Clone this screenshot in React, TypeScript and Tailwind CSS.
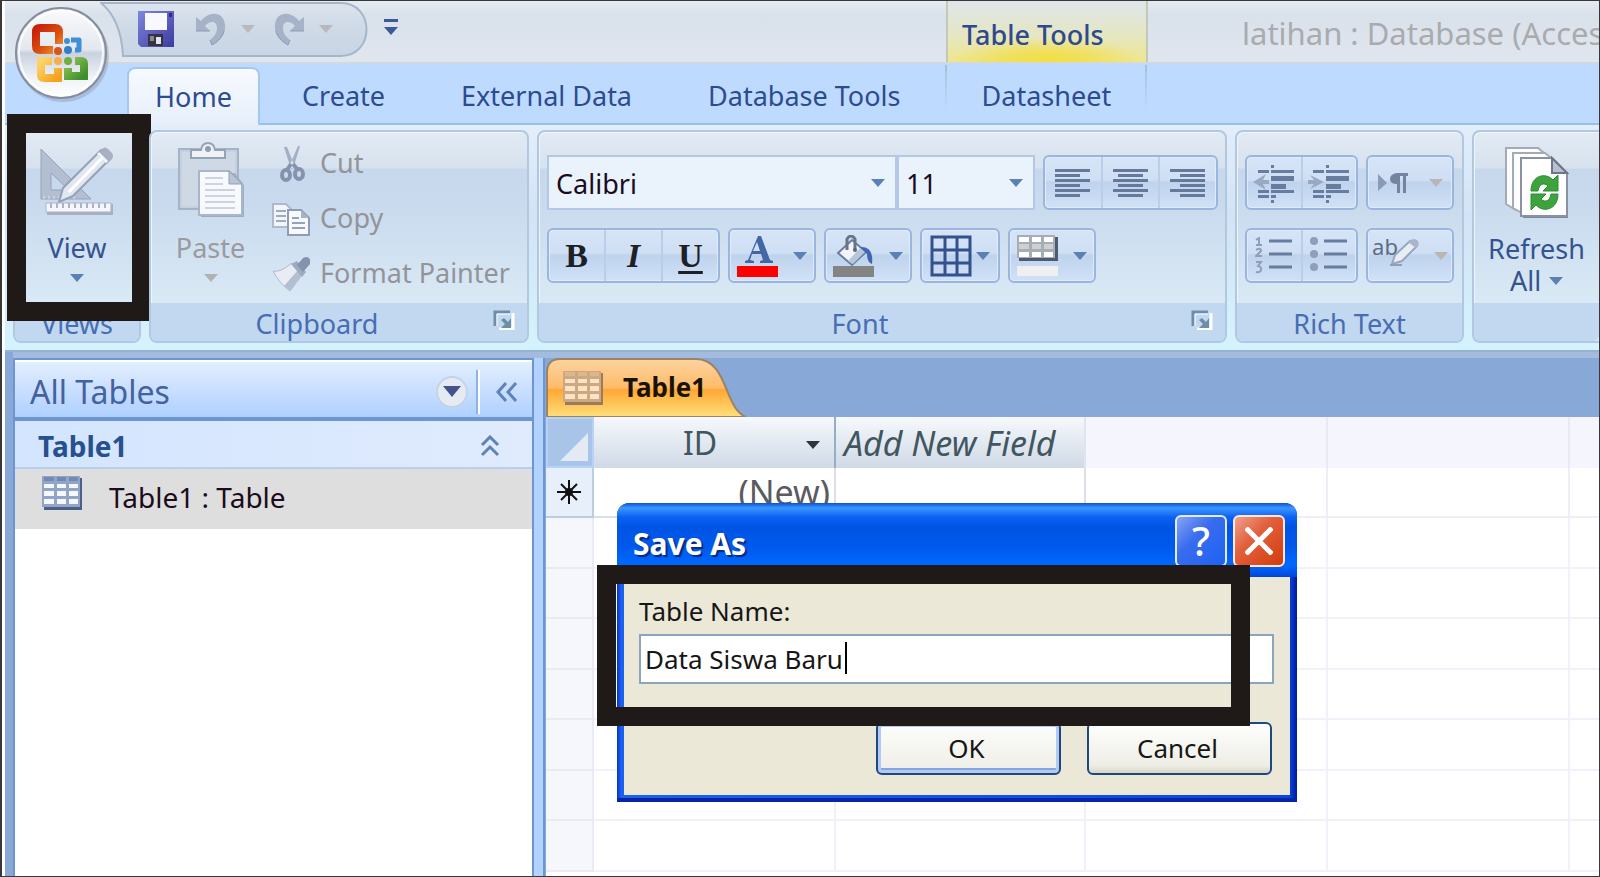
import React, { useState } from "react";

const Arrow = ({ className = "text-[#5b80b5]" }: { className?: string }) => (
  <svg width="14" height="8" viewBox="0 0 14 8" className={`shrink-0 ${className}`}>
    <path d="M0 0h14L7 8z" fill="currentColor" />
  </svg>
);

const OfficeOrb = () => (
  <svg width="98" height="98" viewBox="0 0 98 98">
    <defs>
      <linearGradient id="orb" x1="0" y1="0" x2="0" y2="1">
        <stop offset="0" stopColor="#fbfbfc" />
        <stop offset=".46" stopColor="#e3e7ee" />
        <stop offset=".5" stopColor="#c9d1e0" />
        <stop offset=".78" stopColor="#f0f3f7" />
        <stop offset="1" stopColor="#ffffff" />
      </linearGradient>
      <linearGradient id="orbRed" x1="0" y1="0" x2="1" y2="1">
        <stop offset="0" stopColor="#c9200c" />
        <stop offset=".6" stopColor="#d95010" />
        <stop offset="1" stopColor="#f09030" />
      </linearGradient>
      <linearGradient id="orbYellow" x1="0" y1="0" x2="1" y2="1">
        <stop offset="0" stopColor="#fbd469" />
        <stop offset="1" stopColor="#f6a21a" />
      </linearGradient>
      <linearGradient id="orbGreen" x1="0" y1="0" x2="1" y2="1">
        <stop offset="0" stopColor="#8cc152" />
        <stop offset="1" stopColor="#3f8f2c" />
      </linearGradient>
    </defs>
    <circle cx="50" cy="51" r="46" fill="#7f8797" opacity=".35" />
    <circle cx="48" cy="48" r="45" fill="url(#orb)" stroke="#858d9e" strokeWidth="2" />
    <circle cx="48" cy="48" r="42" fill="none" stroke="#fff" strokeWidth="2" opacity=".8" />
    <path d="M40 45H27q-4 0-4-4V27q0-4 4-4h15q4 0 4 4v12" fill="none" stroke="url(#orbRed)" strokeWidth="8" />
    <path d="M58 35h8v10h-4" fill="none" stroke="#3d8fd6" strokeWidth="5" strokeLinejoin="round" />
    <path d="M39 56H28v14q0 3 3 3h14V63" fill="none" stroke="url(#orbYellow)" strokeWidth="8" />
    <path d="M62 56h6q3 0 3 3v12H55v-8" fill="none" stroke="url(#orbGreen)" strokeWidth="8" />
    <circle cx="45" cy="46" r="4" fill="#d9541c" />
    <circle cx="55" cy="45" r="4" fill="#2f80c6" />
    <circle cx="54" cy="36" r="3" fill="#3d8fd6" />
    <circle cx="45" cy="56" r="4" fill="#f5ae48" />
    <circle cx="55" cy="56" r="4" fill="#72ad3e" />
  </svg>
);

const SaveIcon = () => (
  <svg width="36" height="36" viewBox="0 0 36 36">
    <defs>
      <linearGradient id="floppy" x1="0" y1="0" x2="1" y2="1">
        <stop offset="0" stopColor="#7f86dc" />
        <stop offset="1" stopColor="#3d3aa0" />
      </linearGradient>
    </defs>
    <path d="M0 0h36v36H3l-3-3z" fill="url(#floppy)" />
    <path d="M7 2h22v17H7z" fill="#f8f9ff" />
    <path d="M31 2h3v4h-3z" fill="#2f2c86" />
    <path d="M10 23h15v12H10z" fill="#33343f" />
    <path d="M18 26h5v7h-5z" fill="#e3e5ee" />
    <path d="M12 25h4v5h-4z" fill="#878a96" />
  </svg>
);

const UndoIcon = ({ flip = false }: { flip?: boolean }) => (
  <svg width="32" height="34" viewBox="0 0 32 34" className={flip ? "-scale-x-100" : ""}>
    <path d="M1 5v14h14l-5-5c4-5 12-6 12 2 0 5-3 9-7 12l2 5c8-4 14-11 13-20C29 0 15-2 6 9z" fill="#a5b2c8" />
    <path d="M1 19h14M15 28l2 5c6-3 11-9 12-14" fill="none" stroke="#8d9bb4" strokeWidth="1" />
  </svg>
);

const ViewIcon = () => (
  <svg width="76" height="72" viewBox="0 0 76 72">
    <path d="M2 3v50h50zM12 27l18 17H12z" fill="#b3bfd1" fillRule="evenodd" stroke="#93a2ba" />
    <path d="M5 53v-3m5 3v-3m5 3v-3m5 3v-3m5 3v-3m5 3v-3m5 3v-3" stroke="#dce4ef" />
    <path d="M20 56l4-14L62 4l10 8-38 38z" fill="#e1e7f0" stroke="#94a0b6" strokeWidth="2" />
    <path d="M58 8l5-5q3-3 6 0l4 4q2 3 0 6l-5 5z" fill="#a7b1c3" />
    <path d="M59 7l9 9" stroke="#f1f4f8" strokeWidth="3" />
    <path d="M30 46L64 11" stroke="#fff" strokeWidth="3" />
    <path d="M8 58h66v11H8z" fill="#a5b0c2" />
    <path d="M7 57h65v9H7z" fill="#f4f6fa" stroke="#aab5c7" />
    <path d="M12 57v5m6-5v5m6-5v5m6-5v5m6-5v5m6-5v5m6-5v5m6-5v5m6-5v5m6-5v5" stroke="#a8b3c5" strokeWidth="2" />
  </svg>
);

const PasteIcon = () => (
  <svg width="68" height="76" viewBox="0 0 68 76">
    <path d="M2 7h59v60H2z" fill="#c6d1e0" stroke="#a5b3c8" strokeWidth="2" />
    <path d="M5 10h53v54H5z" fill="#cfd9e6" />
    <path d="M14 8h10q1-7 7-7t7 7h10v8H14z" fill="#eef2f7" stroke="#95a3b9" strokeWidth="2" />
    <circle cx="31" cy="7" r="3" fill="#8f9db4" />
    <path d="M24 31h34l9 12v32H24z" fill="#9fadc2" />
    <path d="M22 29h30l13 13v31H22z" fill="#f7f9fc" stroke="#a9b5c8" strokeWidth="2" />
    <path d="M52 29v13h13z" fill="#b8c3d3" stroke="#93a1b8" />
    <path d="M28 36h18M28 42h18M28 48h30M28 54h30M28 60h30M28 66h30" stroke="#ccd4e0" strokeWidth="2" />
  </svg>
);

const CutIcon = () => (
  <svg width="38" height="38" viewBox="0 0 38 38">
    <path d="M12 2l3 0 8 20-4 2zM28 1l-2 0-9 21 4 2z" fill="#a2afc4" />
    <path d="M19 19l-4 6M21 19l5 6" stroke="#8593ae" strokeWidth="4" />
    <ellipse cx="14" cy="30" rx="4" ry="5" fill="#cfd9e8" stroke="#8593ae" strokeWidth="4" />
    <ellipse cx="27" cy="29" rx="4" ry="5" fill="#cfd9e8" stroke="#8593ae" strokeWidth="4" />
  </svg>
);

const CopyIcon = () => (
  <svg width="38" height="34" viewBox="0 0 38 34">
    <path d="M1 2h13l5 5v18H1z" fill="#f2f5f9" stroke="#aeb9cb" strokeWidth="2" />
    <path d="M4 9h10M4 14h10M4 19h10" stroke="#9eabc0" strokeWidth="2" />
    <path d="M16 8h13l8 8v17H16z" fill="#f7f9fc" stroke="#8e9cb5" strokeWidth="2" />
    <path d="M29 8v8h8z" fill="#a7b3c6" />
    <path d="M20 16h7M20 21h13M20 26h13" stroke="#94a2ba" strokeWidth="2" />
  </svg>
);

const PainterIcon = () => (
  <svg width="38" height="36" viewBox="0 0 38 36">
    <path d="M1 15q7 2 19-8l10 12q-5 7-12 16Q7 27 1 15z" fill="#e9edf3" stroke="#b1bccd" />
    <path d="M18 35l12-16-4-5-14 16z" fill="#b3bed0" />
    <path d="M19 8l6-3 9 11-4 5z" fill="#9daabf" />
    <path d="M25 9l6-7q4-2 6 0t1 6l-7 8z" fill="#8593ae" />
  </svg>
);

const Launcher = () => (
  <svg width="22" height="20" viewBox="0 0 22 20">
    <path d="M20 3v16H6" fill="none" stroke="#fff" strokeWidth="3" />
    <path d="M2 16V2h15" fill="none" stroke="#6d8ea9" strokeWidth="3" />
    <path d="M4 16V4h13" fill="none" stroke="#fff" strokeWidth="1" />
    <path d="M18 8v10H8l4-4-4-4 3-2 4 4z" fill="#6d8ea9" />
  </svg>
);

const AlignIcon = ({ mode }: { mode: "left" | "center" | "right" }) => {
  const x = { left: 0, center: 5, right: 10 }[mode];
  return (
    <svg width="36" height="28" viewBox="0 0 36 28" fill="#66799b">
      {[0, 10, 20].map((y) => (
        <React.Fragment key={y}>
          <rect x="0" y={y} width="35" height="3" />
          <rect x={x} y={y + 5} width="25" height="3" />
        </React.Fragment>
      ))}
    </svg>
  );
};

const FontColorIcon = () => (
  <svg width="42" height="42" viewBox="0 0 42 42">
    <path d="M21 1h3l9 24 3 1v2H23v-2l3-1-2-6H15l-2 6 4 1v2H8v-2l3-1zm-5 15h7l-3-9z" fill="#4366a5" />
    <path d="M0 31h41v11H0z" fill="#ff0000" />
  </svg>
);

const BucketIcon = () => (
  <svg width="42" height="42" viewBox="0 0 42 42">
    <path d="M5 18L19 5l14 12-14 13z" fill="#f1f5fb" stroke="#6b7d9c" strokeWidth="2" />
    <path d="M20 29l12-12-5-4-12 13z" fill="#b6c6df" />
    <path d="M14 15V4q4-6 8 0v11" fill="none" stroke="#697587" strokeWidth="3" />
    <circle cx="22" cy="15" r="2" fill="#5a6576" />
    <path d="M27 12q14-1 12 17-5-2-5-10z" fill="#3e66b4" />
    <path d="M0 31h41v11H0z" fill="#848484" />
  </svg>
);

const BordersIcon = () => (
  <svg width="42" height="42" viewBox="0 0 42 42" fill="none" stroke="#33518d" strokeWidth="3">
    <path d="M2 2h38v38H2zM15 2v38M27 2v38M2 15h38M2 28h38" />
  </svg>
);

const AltRowIcon = () => (
  <svg width="42" height="42" viewBox="0 0 42 42">
    <path d="M2 2h39v24H2z" fill="#4f5b6f" />
    <path d="M0 0h38v23H0z" fill="#a7adb7" />
    <path d="M2 2h10v5H2zm13 0h9v5h-9zm12 0h9v5h-9zM2 17h10v5H2zm13 0h9v5h-9zm12 0h9v5h-9z" fill="#fff" />
    <path d="M2 9h10v5H2zm13 0h9v5h-9zm12 0h9v5h-9z" fill="#d0cfd1" />
    <path d="M0 31h41v10H0z" fill="#efefef" />
  </svg>
);

const IndentIcon = ({ increase = false }: { increase?: boolean }) => (
  <svg width="42" height="40" viewBox="0 0 42 40">
    <path
      d={increase ? "M2 12l14 7-14 7 4-5H0v-4h6z" : "M0 19l13-8-3 6h6v4h-6l3 6z"}
      fill="#9aa9c3"
    />
    <path d="M5 7h11v3H5zM18 7h23v3H18zM18 13h23v5H18zM18 21h15v5H18zM5 27h11v3H5zM18 27h23v3H18zM5 32h11v3H5zM18 32h5v3h-5zM18 2h3v3h-3zM18 37h3v3h-3z" fill="#687c9f" />
  </svg>
);

const ParagraphIcon = () => (
  <svg width="32" height="24" viewBox="0 0 32 24">
    <path d="M1 3l9 9-9 8z" fill="#8b9bb7" />
    <path d="M31 2v3h-2v17h-3V5h-3v17h-3V13q-7 0-7-5t7-6z" fill="#72849f" />
  </svg>
);

const ListIcon = ({ numbered = false }: { numbered?: boolean }) => (
  <svg width="38" height="38" viewBox="0 0 38 38">
    <path d="M14 4h23M14 17h23M14 30h23" stroke="#687c9f" strokeWidth="3" />
    {numbered ? (
      <path d="M1 3l3-2v7M1 8h6M1 13q5-3 5 1l-5 5h6M1 25h5l-3 4q4 1 3 4t-5 2" fill="none" stroke="#8f9eb9" strokeWidth="2" />
    ) : (
      <g fill="#8f9eb9">
        <circle cx="4" cy="4" r="4" />
        <circle cx="4" cy="17" r="4" />
        <circle cx="4" cy="30" r="4" />
      </g>
    )}
  </svg>
);

const PenIcon = () => (
  <svg width="30" height="28" viewBox="0 0 30 28">
    <path d="M2 26l3-9L20 3l7 5-15 15z" fill="#e8edf4" stroke="#97a5bd" strokeWidth="2" />
    <path d="M18 4q5-5 9-2 4 4-1 8" fill="#a9b5c9" />
    <path d="M0 27h12" stroke="#8f9eb9" strokeWidth="2" />
  </svg>
);

const RefreshIcon = () => (
  <svg width="66" height="74" viewBox="0 0 66 74">
    <path d="M2 2h32l12 10v52H12L2 58z" fill="#fdfdfe" stroke="#a3aab8" strokeWidth="2" />
    <path d="M9 7h32l12 10v50H18l-9-5z" fill="#fdfdfe" stroke="#a3aab8" strokeWidth="2" />
    <path d="M19 14h30l15 15v43H19z" fill="#7d8797" />
    <path d="M17 12h31l15 15v43H17z" fill="#fff" stroke="#8a92a2" strokeWidth="2" />
    <path d="M48 12v15h15z" fill="#b8c0cd" stroke="#6d7686" strokeWidth="2" />
    <path d="M27 45c0-16 15-19 22-11l5-5v16H39l5-5c-4-4-9-2-10 5z" fill="#3da33c" stroke="#2c8a34" />
    <path d="M54 48c0 16-15 19-22 11l-5 5V48h15l-5 5c4 4 9 2 10-5z" fill="#3da33c" stroke="#2c8a34" />
  </svg>
);

const TableIcon = ({ faded = false }: { faded?: boolean }) => (
  <svg width="40" height="34" viewBox="0 0 40 34">
    <path d="M2 2h38v32H2z" fill={faded ? "#9a7b5c" : "#4c5f86"} />
    <path d="M0 0h38v31H0z" fill={faded ? "#cda983" : "#93a5c6"} />
    <path d="M2 1h10v4H2zm13 0h9v4h-9zm12 0h9v4h-9z" fill={faded ? "#dcb78e" : "#7288b5"} />
    <path
      d="M2 8h10v4H2zm13 0h9v4h-9zm12 0h9v4h-9zM2 15h10v5H2zm13 0h9v5h-9zm12 0h9v5h-9zM2 23h10v5H2zm13 0h9v5h-9zm12 0h9v5h-9z"
      fill={faded ? "#fce3c4" : "#f5f8fd"}
    />
  </svg>
);

const Chevrons = ({ up = false }: { up?: boolean }) => (
  <svg width="22" height="22" viewBox="0 0 22 22" fill="none" stroke="#5f83b5" strokeWidth="3">
    <path d={up ? "M3 10l8-8 8 8M3 20l8-8 8 8" : "M10 2l-8 9 8 9M20 2l-8 9 8 9"} />
  </svg>
);

interface GroupProps {
  label: string;
  className: string;
  launcher?: boolean;
  children: React.ReactNode;
}

const RibbonGroup = ({ label, className, launcher, children }: GroupProps) => (
  <section
    className={`relative flex flex-col h-[213px] rounded-lg border-2 border-[#b2c8e0] bg-[linear-gradient(to_bottom,#e2eaf3_0,#d7e2ef_36px,#c7d8ed_37px,#c9daee_70px,#d9e9f5_172px)] shadow-[inset_1px_1px_0_#eef5fb] ${className}`}
  >
    <div className="flex-1">{children}</div>
    <div className="flex h-[38px] items-center rounded-b-md bg-[#c1d8f0] pt-1 text-[#476db3]">
      <span className="flex-1 text-center">{label}</span>
      {launcher && (
        <button aria-label={`${label} options`} className="mr-2 -mt-2 flex w-9 justify-end pr-1">
          <Launcher />
        </button>
      )}
    </div>
  </section>
);

const Cluster = ({ className = "", children }: { className?: string; children: React.ReactNode }) => (
  <div
    className={`flex h-[55px] rounded-md border-2 border-[#9ab6de] divide-x-2 divide-[#b9cee9] bg-[linear-gradient(to_bottom,#d6e4f6_0%,#cfdff4_45%,#bfd3ed_50%,#d0e1f7_100%)] shadow-[inset_0_0_0_1px_#dfeafa] ${className}`}
  >
    {children}
  </div>
);

const Tool = ({ label, className = "flex-1", children }: { label: string; className?: string; children: React.ReactNode }) => (
  <button aria-label={label} className={`flex items-center justify-center ${className}`}>
    {children}
  </button>
);

const Combo = ({ label, options, className }: { label: string; options: string[]; className: string }) => (
  <div className={`relative h-[55px] ${className}`}>
    <select
      aria-label={label}
      className="h-full w-full appearance-none border-2 border-[#b3c8e4] bg-[#eaf2fc] pl-[7px] pt-1 text-[#1b0c1c] outline-none"
    >
      {options.map((o) => (
        <option key={o}>{o}</option>
      ))}
    </select>
    <span className="pointer-events-none absolute right-3 top-1/2 -translate-y-1/2">
      <Arrow />
    </span>
  </div>
);

const tabs = ["Create", "External Data", "Database Tools"];

const Header = () => (
  <header className="relative">
    <div className="flex h-[63px] items-stretch border-b-2 border-[#cfd9e5] bg-[linear-gradient(to_bottom,#e6ebf1_0,#d9e1eb_14px,#e0e6ee_60px)]">
      <div className="relative ml-[95px] h-[56px] w-[268px] shrink-0">
        <svg className="absolute inset-0" width="268" height="56" viewBox="0 0 268 56">
          <defs>
            <linearGradient id="qat" x1="0" y1="0" x2="0" y2="1">
              <stop offset="0" stopColor="#dce4ee" />
              <stop offset=".45" stopColor="#cfdae7" />
              <stop offset="1" stopColor="#c7d5e5" />
            </linearGradient>
          </defs>
          <path d="M1 2q20 16 22 53h218c34 0 34-53 0-53z" fill="url(#qat)" stroke="#a5b6cb" strokeWidth="2" />
        </svg>
        <div className="relative flex h-[56px] items-center pl-[38px]">
          <button aria-label="Save"><SaveIcon /></button>
          <button aria-label="Undo" className="ml-[21px] flex items-center gap-[14px]">
            <UndoIcon />
            <Arrow className="text-[#b9b9bd]" />
          </button>
          <button aria-label="Redo" className="ml-[18px] flex items-center gap-[14px]">
            <UndoIcon flip />
            <Arrow className="text-[#b9b9bd]" />
          </button>
        </div>
      </div>
      <button aria-label="Customize toolbar" className="ml-4 flex h-[52px] flex-col items-center justify-center gap-[5px]">
        <span className="h-[3px] w-[14px] bg-[#3a5a98]" />
        <Arrow className="text-[#3a5a98]" />
      </button>
      <div className="ml-[548px] flex w-[202px] shrink-0 items-center border-x-2 border-[#c3c9b8] bg-[radial-gradient(ellipse_50%_24px_at_bottom,#f3df3b_0%,#f0e05e_45%,transparent_100%),linear-gradient(to_bottom,#dfe6ea_0%,#e5e6c4_55%,#efe690_100%)] pl-[14px] pt-2 font-medium text-[#2f4a8c]">
        Table Tools
      </div>
      <h1 className="ml-[94px] flex-1 overflow-hidden whitespace-nowrap pt-2 text-[31px] leading-[48px] text-[#a9abae]">
        latihan : Database (Access 2007)
      </h1>
    </div>
    <nav className="flex h-[61px] items-end border-b-2 border-[#9dbfeb] bg-[#bedbff] text-[#2d4b91]">
      <a href="#home" className="-mb-0.5 ml-[122px] mr-1 flex h-[58px] w-[133px] items-center justify-center rounded-t-lg border-2 border-b-0 border-[#a3c8f3] bg-[linear-gradient(to_bottom,#f7faff,#e6effb)]">
        Home
      </a>
      {tabs.map((tab) => (
        <a key={tab} href="#tab" className="flex h-[58px] items-center whitespace-nowrap px-[38px] pt-1">
          {tab}
        </a>
      ))}
      <a href="#datasheet" className="ml-[7px] flex h-[58px] w-[202px] items-center justify-center border-x-2 pt-1 [border-image:linear-gradient(to_bottom,#a8bed6,#bedbff_80%)_1]">
        Datasheet
      </a>
    </nav>
    <button aria-label="Office" className="absolute left-[8px] top-[4px]">
      <OfficeOrb />
    </button>
  </header>
);

const Ribbon = () => (
  <div className="flex gap-[8px] border-b-2 border-[#93b3d0] bg-[linear-gradient(to_bottom,#e3eefb_0%,#d3e3f5_40%,#d4f3fe_100%)] pb-[7px] pl-[8px] pt-[5px]">
    <RibbonGroup label="Views" className="w-[128px] shrink-0">
      <button className="flex w-full flex-col items-center pt-[14px]">
        <ViewIcon />
        <span className="mt-3 h-[36px] leading-[36px] text-[#34538f]">View</span>
        <span className="mt-2"><Arrow /></span>
      </button>
      <div className="pointer-events-none absolute -left-2 -top-[18px] h-[207px] w-[144px] border-[19px] border-[#1f1a17]" />
    </RibbonGroup>

    <RibbonGroup label="Clipboard" launcher className="w-[380px] shrink-0">
      <div className="flex">
        <button className="flex w-[119px] flex-col items-center pt-[10px] text-[#9a9ba0]">
          <PasteIcon />
          <span className="mt-3 h-[36px] leading-[36px]">Paste</span>
          <span className="mt-2"><Arrow className="text-[#b3b1b1]" /></span>
        </button>
        <div className="flex flex-col pl-[2px] pt-1 text-[#939499]">
          <button className="flex h-[55px] items-center gap-[10px]"><CutIcon />Cut</button>
          <button className="flex h-[55px] items-center gap-[10px]"><CopyIcon />Copy</button>
          <button className="flex h-[55px] items-center gap-[10px]"><PainterIcon />Format Painter</button>
        </div>
      </div>
    </RibbonGroup>

    <RibbonGroup label="Font" launcher className="w-[690px] shrink-0">
      <div className="flex flex-col gap-[18px] pl-[8px] pt-[23px]">
        <div className="flex">
          <Combo label="Font name" options={["Calibri", "Arial"]} className="w-[350px]" />
          <Combo label="Font size" options={["11", "12"]} className="w-[138px]" />
          <Cluster className="ml-2 w-[175px]">
            <Tool label="Align left"><AlignIcon mode="left" /></Tool>
            <Tool label="Center"><AlignIcon mode="center" /></Tool>
            <Tool label="Align right"><AlignIcon mode="right" /></Tool>
          </Cluster>
        </div>
        <div className="flex gap-2 font-['Liberation_Serif',serif] text-[34px] text-[#1d2026]">
          <Cluster className="w-[173px]">
            <Tool label="Bold"><b>B</b></Tool>
            <Tool label="Italic"><i className="font-bold">I</i></Tool>
            <Tool label="Underline"><u className="font-bold decoration-[3px] underline-offset-4">U</u></Tool>
          </Cluster>
          <Cluster className="w-[88px]">
            <Tool label="Font color" className="flex-1 gap-[14px]"><FontColorIcon /><Arrow /></Tool>
          </Cluster>
          <Cluster className="w-[88px]">
            <Tool label="Fill color" className="flex-1 gap-[14px]"><BucketIcon /><Arrow /></Tool>
          </Cluster>
          <Cluster className="w-[80px]">
            <Tool label="Gridlines" className="flex-1 gap-1"><BordersIcon /><Arrow /></Tool>
          </Cluster>
          <Cluster className="w-[88px]">
            <Tool label="Alternate row color" className="flex-1 gap-[14px]"><AltRowIcon /><Arrow /></Tool>
          </Cluster>
        </div>
      </div>
    </RibbonGroup>

    <RibbonGroup label="Rich Text" className="w-[229px] shrink-0">
      <div className="flex flex-col gap-[18px] pl-[8px] pt-[23px]">
        <div className="flex gap-2">
          <Cluster className="w-[113px]">
            <Tool label="Decrease indent"><IndentIcon /></Tool>
            <Tool label="Increase indent"><IndentIcon increase /></Tool>
          </Cluster>
          <Cluster className="w-[88px]">
            <Tool label="Text direction" className="flex-1 gap-[20px]">
              <ParagraphIcon />
              <Arrow className="text-[#b9b7b4]" />
            </Tool>
          </Cluster>
        </div>
        <div className="flex gap-2">
          <Cluster className="w-[113px]">
            <Tool label="Numbering"><ListIcon numbered /></Tool>
            <Tool label="Bullets"><ListIcon /></Tool>
          </Cluster>
          <Cluster className="w-[88px]">
            <Tool label="Highlight" className="flex-1 gap-[14px] pb-2">
              <span className="flex items-center text-[22px] leading-6 text-[#5d6b83]">
                <span className="-mr-2 -mt-3">ab</span>
                <PenIcon />
              </span>
              <Arrow className="mt-2 text-[#b9b7b4]" />
            </Tool>
          </Cluster>
        </div>
      </div>
    </RibbonGroup>

    <RibbonGroup label="" className="min-w-0 flex-1 rounded-r-none border-r-0">
      <button className="flex w-full flex-col items-center pt-[14px] text-[#34538f]">
        <RefreshIcon />
        <span className="mt-[13px] leading-8">Refresh</span>
        <span className="flex items-center gap-2 leading-8">
          All <Arrow />
        </span>
      </button>
    </RibbonGroup>
  </div>
);

const NavPane = () => (
  <aside className="flex w-[521px] shrink-0 flex-col border-2 border-b-0 border-[#6c95d2] bg-white">
    <div className="flex h-[61px] items-center border-b-4 border-t-2 border-b-[#6c95d2] border-t-white bg-[linear-gradient(to_bottom,#e3eeff,#afd0ff)] pl-[15px] pr-[14px] pt-1">
      <h2 className="flex-1 text-[32px] leading-[44px] text-[#44629f]">All Tables</h2>
      <button aria-label="Filter" className="flex h-[32px] w-[32px] items-center justify-center rounded-full border-2 border-[#c4d2e8] bg-[#e6eaf3]">
        <svg width="18" height="11" viewBox="0 0 18 11"><path d="M0 0h18L9 11z" fill="#46528c" /></svg>
      </button>
      <span className="ml-2 h-[44px] w-[4px] border-l-2 border-r-2 border-l-[#8fb3e6] border-r-white" />
      <button aria-label="Collapse pane" className="ml-4"><Chevrons /></button>
    </div>
    <div className="flex h-[48px] items-center justify-between border-b-2 border-[#b7cfee] bg-[linear-gradient(to_right,#d3e5ff,#e0ebfd)] pl-[23px] pr-[31px] pt-1 text-[28px] font-bold text-[#27508f]">
      Table1
      <button aria-label="Collapse group"><Chevrons up /></button>
    </div>
    <a href="#table1" className="flex h-[60px] items-center gap-[27px] bg-[#dedede] pb-1 pl-[27px] text-[28px] text-[#1b0c1c]">
      <span className="-mt-2"><TableIcon /></span>
      Table1 : Table
    </a>
  </aside>
);

const rows = [1, 2, 3, 4, 5, 6, 7];

const Datasheet = () => (
  <div className="flex min-w-0 flex-1 flex-col">
    <div className="flex h-[59px] shrink-0">
      <button className="relative flex w-[202px] items-center pl-[17px] text-[26px] font-bold text-[#1b1206]">
        <svg className="absolute left-0 top-0" width="202" height="59" viewBox="0 0 202 59">
          <defs>
            <linearGradient id="tab" x1="0" y1="0" x2="0" y2="1">
              <stop offset="0" stopColor="#fdd3a0" />
              <stop offset=".5" stopColor="#fdbb68" />
              <stop offset=".53" stopColor="#ffa733" />
              <stop offset="1" stopColor="#ffe07c" />
            </linearGradient>
          </defs>
          <path d="M1 59V13Q2 1 14 1h136c32 0 28 50 50 58z" fill="url(#tab)" stroke="#9b8366" strokeWidth="2" />
        </svg>
        <span className="relative"><TableIcon faded /></span>
        <span className="relative ml-[20px]">Table1</span>
      </button>
    </div>
    <div className="min-h-0 flex-1 overflow-hidden bg-white">
      <table className="w-full table-fixed border-separate border-spacing-0">
        <colgroup>
          <col className="w-[48px]" />
          <col className="w-[242px]" />
          <col className="w-[250px]" />
          <col className="w-[242px]" />
          <col className="w-[242px]" />
          <col />
        </colgroup>
        <thead>
          <tr className="h-[51px] text-[#41565f]">
            <th aria-label="Select all" className="border-2 border-[#b6d2f7] bg-[#a9c4e9] p-0">
              <svg width="28" height="28" viewBox="0 0 28 28" className="ml-auto mr-1 mt-2">
                <path d="M28 0v28H0z" fill="#e3eaf5" />
              </svg>
            </th>
            <th className="border-r-2 border-[#97acc9] bg-[linear-gradient(to_bottom,#f6f9fc,#cfd9e6)] p-0 font-normal">
              <span className="flex items-center pr-[14px] text-[32px] leading-[44px]">
                <span className="flex-1 text-center">ID</span>
                <Arrow className="mt-1 text-[#30353c]" />
              </span>
            </th>
            <th className="whitespace-nowrap border-r-2 border-[#dfe5f0] bg-[linear-gradient(to_bottom,#f6f9fc,#cfd9e6)] p-0 pl-2 text-left text-[34px] font-normal italic leading-[44px]">
              Add New Field
            </th>
            <th className="border-r-2 border-[#e8eaf4] bg-[#f5f6fd] p-0" />
            <th className="border-r-2 border-[#e8eaf4] bg-[#f5f6fd] p-0" />
            <th className="bg-[#f5f6fd] p-0" />
          </tr>
        </thead>
        <tbody>
          <tr className="h-[50px]">
            <td className="border-b-2 border-r-2 border-[#bccde2] bg-[#e7f0fa] p-0">
              <svg width="24" height="24" viewBox="0 0 24 24" className="mx-auto" stroke="#111" strokeWidth="2">
                <path d="M12 0v24M0 12h24M4 4l16 16M20 4L4 20" />
                <circle cx="12" cy="12" r="3" fill="#111" />
              </svg>
            </td>
            <td className="border-b-2 border-r-2 border-[#dcdeea] p-0 pr-1 text-right text-[34px] leading-[48px] text-[#5a5a60]">(New)</td>
            <td className="border-b-2 border-r-2 border-[#dcdeea] p-0" />
            <td className="border-b-2 border-r-2 border-[#eeeef7] p-0" />
            <td className="border-b-2 border-r-2 border-[#eeeef7] p-0" />
            <td className="border-b-2 border-[#eeeef7] p-0" />
          </tr>
          {rows.map((row) => (
            <tr key={row} className="h-[50px] even:h-[51px]">
              <td className="border-b-2 border-r-2 border-[#e9eaf5] bg-[#f6f6fd] p-0" />
              <td className="border-b-2 border-r-2 border-[#f1f1f9] p-0" />
              <td className="border-b-2 border-r-2 border-[#f1f1f9] p-0" />
              <td className="border-b-2 border-r-2 border-[#f1f1f9] p-0" />
              <td className="border-b-2 border-r-2 border-[#f1f1f9] p-0" />
              <td className="border-b-2 border-[#f1f1f9] p-0" />
            </tr>
          ))}
        </tbody>
      </table>
    </div>
  </div>
);

const SaveAsDialog = () => {
  const [name, setName] = useState("Data Siswa Baru");
  return (
    <div
      role="dialog"
      aria-labelledby="save-as-title"
      className="absolute left-[612px] top-[502px] w-[680px] rounded-t-xl bg-[linear-gradient(to_right,#0831c8_0,#1b62f0_4px,#0a46e0_672px,#001a9c_680px)] px-[7px] pb-[7px] text-[26px] text-[#161616] shadow-[inset_0_-4px_0_#0526a8]"
    >
      <div className="-mx-[7px] flex h-[74px] items-center rounded-t-xl bg-[linear-gradient(to_bottom,#0a52d8_0,#3d97ff_5px,#0c62f2_14px,#0054e3_24px,#0059ec_44px,#0068ff_62px,#0046d8_74px)] pl-4 pr-[12px] pt-[2px]">
        <h2 id="save-as-title" className="flex-1 pt-1 text-[30px] font-bold text-white [text-shadow:2px_2px_1px_#0a2a80]">
          Save As
        </h2>
        <button aria-label="Help" className="h-[52px] w-[52px] rounded-md border-2 border-[#e3ecff] bg-[linear-gradient(135deg,#86a4f5_0%,#3a6cee_40%,#1c62f4_100%)] text-[40px] font-medium leading-[46px] text-white">
          ?
        </button>
        <button aria-label="Close" className="ml-[6px] flex h-[52px] w-[52px] items-center justify-center rounded-md border-2 border-[#ffe6df] bg-[linear-gradient(135deg,#f0a08b_0%,#e2603d_40%,#d33c0c_100%)]">
          <svg width="28" height="28" viewBox="0 0 28 28" stroke="#fff" strokeWidth="5">
            <path d="M1 1l26 26M27 1L1 27" />
          </svg>
        </button>
      </div>
      <form className="bg-[#ebe8d7] pb-[20px] pl-[15px] pr-[16px] pt-[16px]" onSubmit={(e) => e.preventDefault()}>
        <label htmlFor="table-name" className="block leading-[36px]">
          Table Name:
        </label>
        <div className="relative mt-[5px]">
          <input
            id="table-name"
            value={name}
            onChange={(e) => setName(e.target.value)}
            className="h-[50px] w-full border-2 border-[#8aa6bd] bg-white pl-1 outline-none"
          />
          <span className="absolute left-[206px] top-2 h-8 w-[2px] bg-black" />
        </div>
        <div className="mr-[2px] mt-[38px] flex justify-end gap-[26px]">
          <button className="h-[53px] w-[185px] rounded-md border-2 border-[#1c4a80] bg-[linear-gradient(to_bottom,#fdfdfb,#eeede6)] pr-1 shadow-[inset_0_0_0_3px_#b3c9f2,inset_0_-5px_0_#86a4e2]">
            OK
          </button>
          <button className="h-[53px] w-[185px] rounded-md border-2 border-[#1c4a80] bg-[linear-gradient(to_bottom,#fefefd,#eeede5_85%,#d9d5c8)] pr-1">
            Cancel
          </button>
        </div>
      </form>
      <div className="pointer-events-none absolute -left-[20px] top-[62px] h-[161px] w-[653px] border-[19px] border-[#1f1a17]" />
    </div>
  );
};

export default function App() {
  return (
    <div className="h-screen border border-l-2 border-[#39373a] bg-white font-['Noto_Sans','Open_Sans',sans-serif] text-[27px]">
      <div className="relative flex h-full flex-col overflow-hidden border-l-[3px] border-white">
        <Header />
        <Ribbon />
        <main className="flex min-h-0 flex-1 bg-[#88a9d7] pl-[8px]">
          <div className="flex min-w-0 flex-1 border-t-[6px] border-[#a3bcde]">
            <NavPane />
            <div className="mr-[1px] w-[11px] shrink-0 border-r-2 border-[#6c95d2] bg-[#b2d2ff]" />
            <Datasheet />
          </div>
        </main>
        <SaveAsDialog />
      </div>
    </div>
  );
}
